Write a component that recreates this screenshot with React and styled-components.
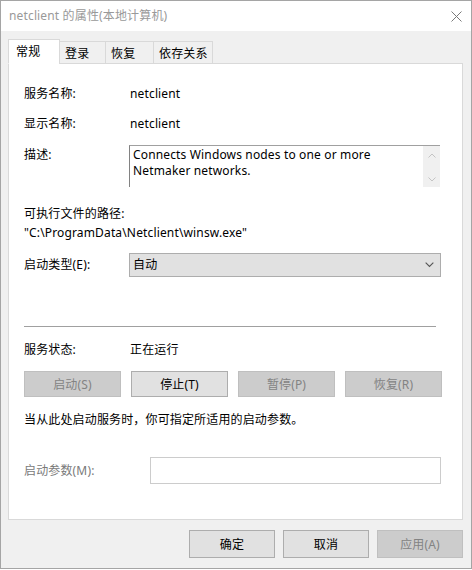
import React from 'react';
import styled, { createGlobalStyle } from 'styled-components';

const GlobalStyle = createGlobalStyle`
  html, body {
    margin: 0;
    padding: 0;
    background: #ffffff;
  }
  body {
    font-family: "Noto Sans", "Noto Sans CJK SC", sans-serif;
    font-size: 12px;
    letter-spacing: 0.15px;
    color: #000000;
  }
`;

const Window = styled.div`
  width: 472px;
  height: 569px;
  box-sizing: border-box;
  border: 1px solid #a5a5a5;
  background: #f0f0f0;
  display: flex;
  flex-direction: column;
`;

const TitleBar = styled.div`
  height: 30px;
  flex-shrink: 0;
  background: #ffffff;
  display: flex;
  align-items: center;
  justify-content: space-between;
  padding: 0 9px 0 8px;
`;

const Title = styled.span`
  color: #999999;
  font-size: 12px;
  line-height: 16px;
`;

const CloseButton = styled.span`
  display: flex;
  align-items: center;
  justify-content: center;
  width: 12px;
  height: 12px;
`;

const Body = styled.div`
  flex: 1;
  display: flex;
  flex-direction: column;
  padding: 9px 7px 0 7px;
`;

const TabStrip = styled.div`
  display: flex;
  align-items: flex-end;
  height: 24px;
  margin-bottom: -1px;
  position: relative;
  z-index: 1;
`;

const Tab = styled.div`
  box-sizing: border-box;
  width: ${p => p.$width}px;
  height: ${p => (p.$active ? '25px' : '23px')};
  padding: ${p => (p.$active ? '0 0 0 7px' : '2px 0 0 5px')};
  display: flex;
  align-items: center;
  background: ${p => (p.$active ? '#ffffff' : '#f0f0f0')};
  border: 1px solid #d9d9d9;
  border-bottom: ${p => (p.$active ? '1px solid #ffffff' : '1px solid #d9d9d9')};
  margin-left: ${p => (p.$first ? '0' : '-1px')};
  line-height: 16px;
`;

const Panel = styled.div`
  width: 455px;
  height: 457px;
  box-sizing: border-box;
  background: #ffffff;
  border: 1px solid #d9d9d9;
  padding: 22px 20px 0 15px;
  display: flex;
  flex-direction: column;
`;

const Row = styled.div`
  display: flex;
  align-items: ${p => p.$align || 'center'};
  margin-top: ${p => p.$gap || 0}px;
  line-height: 16px;
`;

const Label = styled.div`
  width: ${p => p.$width || 105}px;
  flex-shrink: 0;
  color: ${p => (p.$disabled ? '#7a7a7a' : '#000000')};
  margin-top: ${p => p.$offset || 0}px;
`;

const Value = styled.div`
  margin-left: 1px;
`;

const Line = styled.div`
  line-height: 16px;
  margin-top: ${p => p.$gap || 0}px;
`;

const TextBox = styled.div`
  width: 311px;
  height: 42px;
  box-sizing: border-box;
  border-top: 1px solid #a0a0a0;
  border-left: 1px solid #828282;
  display: flex;
`;

const TextContent = styled.div`
  flex: 1;
  padding: 1px 0 0 3px;
  line-height: 16px;
`;

const ScrollBar = styled.div`
  width: 17px;
  background: #f0f0f0;
  display: flex;
  flex-direction: column;
  align-items: center;
  justify-content: space-between;
  padding: 7px 0 5px;
`;

const Select = styled.div`
  width: 312px;
  height: 24px;
  box-sizing: border-box;
  background: #e1e1e1;
  border: 1px solid #adadad;
  display: flex;
  align-items: center;
  justify-content: space-between;
  padding: 0 6px 0 3px;
`;

const Separator = styled.div`
  height: 1px;
  width: 412px;
  background: #a0a0a0;
  margin-top: 49px;
`;

const ButtonRow = styled.div`
  display: flex;
  justify-content: space-between;
  margin-top: ${p => p.$gap || 0}px;
`;

const Button = styled.button`
  width: ${p => p.$width || 97}px;
  height: ${p => p.$height || 26}px;
  box-sizing: border-box;
  font-family: inherit;
  font-size: 12px;
  letter-spacing: inherit;
  padding: 0;
  background: ${p => (p.disabled ? '#cccccc' : '#e1e1e1')};
  border: 1px solid ${p => (p.disabled ? '#bfbfbf' : '#adadad')};
  color: ${p => (p.disabled ? '#838383' : '#000000')};
  border-radius: 0;
`;

const Input = styled.div`
  width: 291px;
  height: 27px;
  box-sizing: border-box;
  border: 1px solid #cccccc;
  background: #ffffff;
`;

const Footer = styled.div`
  display: flex;
  justify-content: flex-end;
  gap: 8px;
  margin-top: 10px;
  margin-right: 1px;
`;

const Chevron = ({ up, color = '#c4c4c4', w = 8 }) => (
  <svg width={w} height={w / 2 + 1} viewBox="0 0 8 5">
    <polyline
      points={up ? '0.5,4.5 4,1 7.5,4.5' : '0.5,0.5 4,4 7.5,0.5'}
      fill="none"
      stroke={color}
      strokeWidth="1"
    />
  </svg>
);

export default function App() {
  return (
    <>
      <GlobalStyle />
      <Window>
        <TitleBar>
          <Title>netclient 的属性(本地计算机)</Title>
          <CloseButton>
            <svg width="11" height="11" viewBox="0 0 11 11">
              <path d="M0.5 0.5 L10.5 10.5 M10.5 0.5 L0.5 10.5" stroke="#7a7a7a" strokeWidth="1" fill="none" />
            </svg>
          </CloseButton>
        </TitleBar>
        <Body>
          <TabStrip>
            <Tab $active $first $width={52}>常规</Tab>
            <Tab $width={47}>登录</Tab>
            <Tab $width={49}>恢复</Tab>
            <Tab $width={60}>依存关系</Tab>
          </TabStrip>
          <Panel>
            <Row>
              <Label>服务名称:</Label>
              <Value>netclient</Value>
            </Row>
            <Row $gap={14}>
              <Label>显示名称:</Label>
              <Value>netclient</Value>
            </Row>
            <Row $gap={13} $align="flex-start">
              <Label $offset={2}>描述:</Label>
              <TextBox>
                <TextContent>
                  Connects Windows nodes to one or more
                  <br />
                  Netmaker networks.
                </TextContent>
                <ScrollBar>
                  <Chevron up />
                  <Chevron />
                </ScrollBar>
              </TextBox>
            </Row>
            <Line $gap={19}>可执行文件的路径:</Line>
            <Line $gap={3}>"C:\ProgramData\Netclient\winsw.exe"</Line>
            <Row $gap={12}>
              <Label>启动类型(E):</Label>
              <Select>
                <span>自动</span>
                <Chevron color="#555555" w={9} />
              </Select>
            </Row>
            <Separator />
            <Row $gap={15}>
              <Label>服务状态:</Label>
              <Value>正在运行</Value>
            </Row>
            <ButtonRow $gap={13}>
              <Button disabled>启动(S)</Button>
              <Button>停止(T)</Button>
              <Button disabled>暂停(P)</Button>
              <Button disabled>恢复(R)</Button>
            </ButtonRow>
            <Line $gap={15}>当从此处启动服务时，你可指定所适用的启动参数。</Line>
            <Row $gap={29}>
              <Label $width={126} $disabled>启动参数(M):</Label>
              <Input />
            </Row>
          </Panel>
          <Footer>
            <Button $width={86} $height={28}>确定</Button>
            <Button $width={86} $height={28}>取消</Button>
            <Button $width={86} $height={28} disabled>应用(A)</Button>
          </Footer>
        </Body>
      </Window>
    </>
  );
}
